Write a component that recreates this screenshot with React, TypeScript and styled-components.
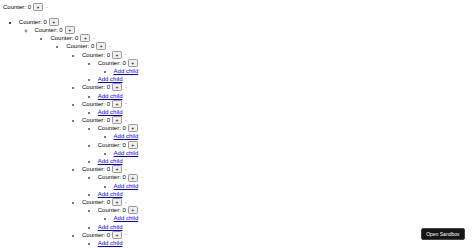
import React, { useState } from "react";
import styled, { createGlobalStyle } from "styled-components";

type Node = { id: number; count: number; children: Node[] };

let nextId = 1;
const make = (children: Node[] = []): Node => ({ id: nextId++, count: 0, children });

/* initial tree, as it stands in the screenshot */
const initialTree: Node = make([
  make([
    make([
      make([
        make([make([make()]), make(), make(), make([make(), make()]), make([make()]), make([make()]), make()]),
      ]),
    ]),
  ]),
]);

const GlobalStyle = createGlobalStyle`
  body {
    margin: 3px;
    font-family: "Liberation Sans", Arial, sans-serif;
    font-size: 6px;
    color: #000;
    background: #fff;
  }
`;

const Row = styled.div`
  display: flex;
  align-items: center;
  height: 8.2px;
  white-space: nowrap;
`;

const Label = styled.span`
  line-height: 8.2px;
`;

const PlusButton = styled.button`
  box-sizing: border-box;
  width: 10px;
  height: 8px;
  margin-left: 2px;
  padding: 0;
  font-family: "Liberation Sans", Arial, sans-serif;
  font-size: 5px;
  line-height: 6px;
  color: #000;
  background: #efefef;
  border: 0.6px solid #9a9a9a;
  border-radius: 1.2px;
  cursor: pointer;
`;

const Hint = styled.span`
  width: 1.5px;
  height: 1px;
  margin-left: 3px;
  background: #d6d6d6;
`;

const List = styled.ul<{ $depth: number }>`
  margin: ${(p) => (p.$depth === 1 ? "6.6px 0" : "0")};
  padding-left: 15.8px;
  list-style-type: ${(p) => (p.$depth === 1 ? "disc" : p.$depth === 2 ? "circle" : "square")};
  ${(p) => (p.$depth === 2 ? "li::marker { color: #777; }" : "")}
`;

const Item = styled.li`
  line-height: 8.2px;
`;

const AddLink = styled.a`
  color: #0000ee;
  text-decoration: underline;
  cursor: pointer;
`;

const SandboxButton = styled.button`
  position: fixed;
  right: 9px;
  bottom: 8px;
  height: 12px;
  padding: 0 4.5px;
  font-family: "Liberation Sans", Arial, sans-serif;
  font-size: 5px;
  color: #fff;
  background: #151515;
  border: 0.6px solid #444;
  border-radius: 2px;
`;

const update = (node: Node, id: number, fn: (n: Node) => Node): Node =>
  node.id === id ? fn(node) : { ...node, children: node.children.map((c) => update(c, id, fn)) };

const Counter: React.FC<{
  node: Node;
  depth: number;
  onChange: (id: number, fn: (n: Node) => Node) => void;
}> = ({ node, depth, onChange }) => (
  <>
    <Row>
      <Label>Counter: {node.count}</Label>
      <PlusButton onClick={() => onChange(node.id, (n) => ({ ...n, count: n.count + 1 }))}>+</PlusButton>
      <Hint />
    </Row>
    <List $depth={depth + 1}>
      {node.children.map((c) => (
        <Item key={c.id}>
          <Counter node={c} depth={depth + 1} onChange={onChange} />
        </Item>
      ))}
      <Item>
        <AddLink onClick={() => onChange(node.id, (n) => ({ ...n, children: [...n.children, make()] }))}>
          Add child
        </AddLink>
      </Item>
    </List>
  </>
);

export default function App() {
  const [tree, setTree] = useState<Node>(initialTree);
  const onChange = (id: number, fn: (n: Node) => Node) => setTree((t) => update(t, id, fn));

  return (
    <>
      <GlobalStyle />
      <Counter node={tree} depth={0} onChange={onChange} />
      <SandboxButton>Open Sandbox</SandboxButton>
    </>
  );
}
